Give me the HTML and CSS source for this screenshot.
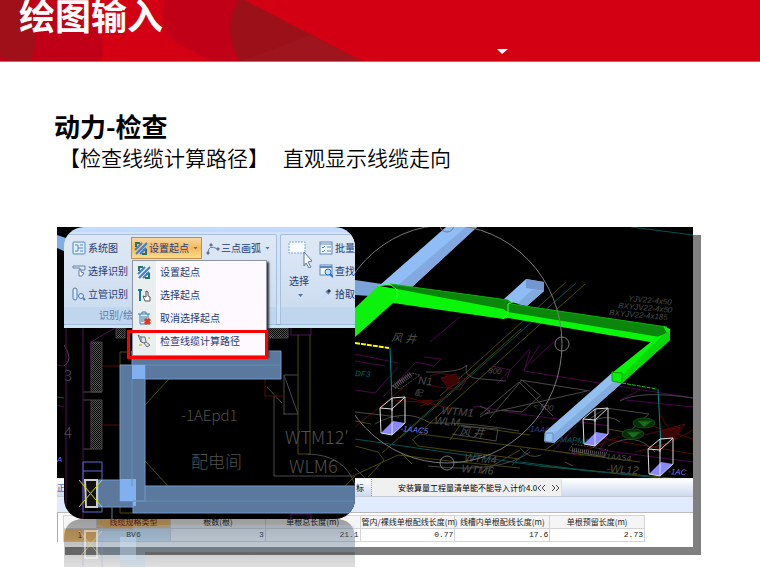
FILE: index.html
```
<!DOCTYPE html>
<html lang="zh-CN">
<head>
<meta charset="utf-8">
<title>绘图输入</title>
<link rel="stylesheet" href="styles.css">
</head>
<body>
<header class="banner">
  <svg class="banner-art" viewBox="0 0 760 62" preserveAspectRatio="xMinYMin slice" aria-hidden="true">
    <path d="M0 0H78Q105 24 102 62H0Z" fill="#c00016"/>
    <path d="M0 0H25Q44 30 30 62H11L0 56Z" fill="#a01019"/>
    <path d="M165 0Q157 29 177 43L213 62H250V0Z" fill="#c00016"/>
    <path d="M238 0Q221 30 240 62H364L245 0Z" fill="#9c1119"/>
    <path d="M240 62L310 35L364 62Z" fill="#a01522" opacity=".7"/>
    <path d="M245 0L364 62H760V0Z" fill="#d30014"/>
    <path d="M497 49H508L502 54Z" fill="#fff"/>
  </svg>
  <h1>绘图输入</h1>
</header>
<main>
  <h2>动力-检查</h2>
  <p class="lead">【检查线缆计算路径】&nbsp;&nbsp; 直观显示线缆走向</p>

  <section class="shot">
    <svg class="scene" viewBox="57 227 636 251" role="img" aria-label="线缆三维走向">
      <defs>
        <g id="box">
          <path d="M1 25L12 27L25 15L13 13Z" fill="#8888ff"/>
          <path d="M0 0L12 1L25-11L12-10ZM0 0L1 25L12 27L25 15V-11M12 1V27M12-10V3" fill="none" stroke="#ddd"/>
        </g>
      </defs>
      <path d="M57 227H693V478H57Z"/>
      <path d="M57 235L66 238V252L57 248Z" fill="#7fafe6"/>
      <g fill="none" stroke="#4b064b">
        <path d="M430 342L460 317M355 354L398 363M355 361L385 366M424 357L441 359L434 366L416 362L383 397M355 390L375 393L398 367M492 366L510 370L507 378M470 413L475 406L520 414L610 426M530 351L524 371L693 398M540 345L523 371M584 456L553 451L577 425M626 400L693 407M620 400L640 390M561 335L531 363M610 430L600 450L693 462M497 384L530 349M57 365L64 366M57 405L64 407"/>
      </g>
      <g fill="none" stroke="#474700">
        <path d="M566 282L440 396M585 284L420 432M521 329L382 453M355 421L371 424M400 452L412 464M355 446L378 452L384 460L368 477M355 475L398 455L440 460L520 468M412 440L420 434L640 462M450 440L460 425L530 435M545 450L560 440M413 440L418 446L520 459M355 468L365 478M540 466L693 480M480 473L520 450M608 429L625 432"/>
      </g>
      <g fill="none" stroke="#005454">
        <path d="M576 283L400 438M355 439L540 466L660 478M512 465L530 448M520 462L600 472M631 227L693 235M57 397L64 398"/>
      </g>
      <g fill="none" stroke="#560808">
        <path d="M355 427L403 388M430 376L440 373L467 379L460 390L427 385M405 397L452 409M393 400L432 403M420 406L448 397M640 422L693 439M645 435L685 424L672 442L635 452M660 415L676 440M600 438L693 454M660 448L693 430M575 455L620 436"/>
        <path d="M441 378L455 374L460 382L448 388ZM422 401L432 400L428 405ZM660 431L681 427L674 437L661 440Z" fill="#3c0606"/>
      </g>
      <g fill="none" stroke="#484848">
        <path d="M426 372Q460 373 467 365Q462 378 482 379L506 381M490 418L522 380L541 396M480 415L519 382L553 416M485 414L587 391M480 417L490 411L480 406M375 424Q405 407 430 423Q470 422 519 431M461 426L498 429L496 441L452 434M520 380L590 391M502 410L522 412L540 396M620 401Q640 390 693 398M588 420L606 408L649 414L630 431M595 420Q610 414 620 422M608 446Q635 430 655 452M428 466Q500 474 530 452M520 448Q530 460 541 455M565 462L573 466M355 412L399 417"/>
        <path d="M392 386L412 373L420 375L400 389ZM569 450L573 444L608 450L604 457Z" stroke-dasharray="2 1"/>
      </g>
      <g fill="none" stroke="#777" stroke-width="5" stroke-dasharray="1 1">
        <path d="M394 387L411 374M572 450L606 455" opacity=".7"/>
      </g>
      <g fill="#082c08" stroke="#0d4d0d">
        <ellipse cx="644" cy="423" rx="11" ry="5"/><ellipse cx="633" cy="434" rx="11" ry="5"/>
        <path d="M638 421H652L644 427ZM627 432H641L633 438Z" fill="#187018"/>
      </g>
      <g class="cad">
        <text transform="translate(628 301) rotate(5)">YJV22-4x50</text>
        <text transform="translate(618 308) rotate(5)">BXYJV22-4x50</text>
        <text transform="translate(609 315) rotate(5)">BXYJV22-4x185</text>
        <text class="cad-lg" transform="translate(391 341) rotate(5)">风 井</text>
        <text class="cad-lg" transform="translate(418 384) rotate(5)">N1</text>
        <text transform="translate(414 395) rotate(8)">配</text>
        <text class="cad-lg" transform="translate(441 414) rotate(5)">WTM1</text>
        <text class="cad-lg" transform="translate(434 424) rotate(5)">WLM</text>
        <text class="cad-lg" transform="translate(459 435) rotate(5)">风 井</text>
        <text transform="translate(488 373) rotate(5)">800</text>
        <text transform="translate(533 409) rotate(5)">&lt; 800</text>
        <text class="cad-lg" transform="translate(464 461) rotate(5)">WTM4</text>
        <text class="cad-lg" transform="translate(461 472) rotate(5)">WTM6</text>
        <text transform="translate(606 459) rotate(5)">1AAS4</text>
        <text class="cad-lg" transform="translate(606 472) rotate(4)">-WL12</text>
        <text class="cad-teal" transform="translate(355 376) rotate(4)">DF3</text>
        <text class="cad-teal" transform="translate(560 442) rotate(4)">MAPM4</text>
        <text class="cad-vio" transform="translate(400 431) rotate(6)">-1AAC5</text>
        <text class="cad-dim" transform="translate(527 431) rotate(6)">-1AAC5</text>
        <text class="cad-vio" transform="translate(668 474) rotate(4)">-1AC</text>
        <text class="cad-vio" x="57" y="462">A</text>
      </g>
      <path d="M355 280L382 284L370 296L355 295Z" fill="#7aa3d8"/>
      <path d="M446 227H477L412 287L380 285Z" fill="#90bdf6"/>
      <path d="M466 227H477L412 287L397 286Z" fill="#82aae0"/>
      <path d="M503 300L526 279L544 282V291L527 306Z" fill="#8ebcf4"/>
      <path d="M526 279L544 282V291L526 288Z" fill="#7398cf"/>
      <path d="M532 290L544 291L527 306L517 304Z" fill="#81aadf"/>
      <path d="M355 308L378 286L390 288L397 290V298L393 303L355 337Z" fill="#0df20d"/>
      <path d="M390 284L508 300L511 304L667 327L668 339L508 314L397 290Z" fill="#0b850b"/>
      <path d="M378 286L397 289L503 309V319L393 303ZM508 312L660 337L668 334L656 343L508 318L503 319V309Z" fill="#09f509"/>
      <path d="M390 284L508 300L511 304L667 327" fill="none" stroke="#0bb00b"/>
      <path d="M503 319L508 314V304L513 302M378 286L390 284L397 290V298" fill="none" stroke="#3bff3b"/>
      <path d="M663 326L670 329V340L622 383L612 380V373L657 337L667 333Z" fill="#08f508"/>
      <path d="M664 334L670 331V340L622 383V375Z" fill="#08d808"/>
      <path d="M612 373L622 383L554 443L544 441L545 432Z" fill="#92bff0"/>
      <path d="M620 376L622 383L554 443L553 435Z" fill="#82abde"/>
      <path d="M545 433H553V442H545Z" fill="none" stroke="#668ec2"/>
      <path d="M612 372L622 373V383L612 381Z" fill="#09ed09" stroke="#04a604"/>
      <path d="M355 343L389 348" stroke="#ff0" stroke-width="2" stroke-dasharray="5 1"/>
      <path d="M390 348L392 402M658 389L661 447" fill="none" stroke="#008b8b"/>
      <path d="M622 383L657 389" stroke="#17c417" stroke-dasharray="4 1"/>
      <use href="#box" x="380" y="408"/><use href="#box" x="583" y="419"/><use href="#box" x="648" y="449"/>
      <g fill="none" stroke="#777">
        <ellipse cx="447" cy="344" rx="115" ry="119"/>
        <circle cx="562" cy="344" r="7"/><circle cx="447" cy="463" r="7"/><circle cx="447" cy="225" r="7"/>
      </g>
    </svg>

    <div class="tabs">
      <span class="tab-edge">正</span>
      <span class="tab-mark">标</span>
      <div class="tab">
        <span>安装算量工程量清单能不能导入计价4.0</span>
        <svg class="arrows" viewBox="0 0 24 8" fill="none" stroke="#444" role="img" aria-label="前后翻页"><path d="M4 1L1 4L4 7M8 1L5 4L8 7M15 1L18 4L15 7M19 1L22 4L19 7"/></svg>
      </div>
    </div>
    <div class="subbar"></div>
    <div class="sheet">
      <table>
        <thead>
          <tr><th class="c-no"></th><th class="c-type on">线缆规格类型</th><th>根数(根)</th><th>单根总长度(m)</th><th>管内/裸线单根配线长度(m)</th><th>线槽内单根配线长度(m)</th><th>单根预留长度(m)</th></tr>
        </thead>
        <tbody>
          <tr><th class="on">1</th><td class="picked">BV6</td><td>3</td><td>21.1</td><td>0.77</td><td>17.6</td><td>2.73</td></tr>
        </tbody>
      </table>
    </div>

    <div class="card">
      <div class="ribbon">
        <div class="group tools">
          <div class="rows">
            <div class="col">
              <button><svg class="ico" viewBox="0 0 14 14" fill="none" stroke="#4d87c9"><rect x="1" y="1" width="12" height="12" rx="1" fill="#e3f0ff"/><path d="M3 4H6V10H3M8 4H11M8 7H11M8 10H11M6 7H8"/></svg>系统图</button>
              <button><svg class="ico" viewBox="0 0 14 14" fill="#dceafa" stroke="#6780a8"><path d="M1 2H13V6H8V4H1Z"/><path d="M7 6V12H10L12 9L9 8V6Z" fill="#fff"/></svg>选择识别</button>
              <button><svg class="ico" viewBox="0 0 14 14" fill="#dceafa" stroke="#5379ae"><rect x="1" y="1" width="4" height="12" rx="2"/><circle cx="9" cy="9" r="2.5"/><path d="M11 11L13 13" stroke-width="2"/></svg>立管识别</button>
            </div>
            <div class="col">
              <button class="hot"><svg class="ico" viewBox="0 0 14 14" fill="none" stroke="#2a7070" stroke-width="2"><path d="M1 2H6M2 2V6M8 13H13M9 9H13M12 9V13"/><path d="M1 9L8 2M2 13L13 2M6 13L12 7" stroke="#3e7fd0"/></svg>设置起点<i class="caret"></i></button>
            </div>
            <div class="col">
              <button class="arc"><svg class="ico" viewBox="0 0 14 14" fill="none" stroke="#657b9a"><path d="M2 12Q2 3 12 8"/><path d="M1 11H3V13H1ZM4 3H6V5H4ZM11 7H13V9H11Z" fill="#546f91"/></svg>三点画弧<i class="caret"></i></button>
            </div>
          </div>
          <div class="group-name">识别/绘制</div>
        </div>
        <div class="group pick">
          <div class="rows">
            <button class="big"><svg class="cursor" viewBox="0 0 26 28"><rect x="3" y="2" width="16" height="11" fill="#f8fbff" stroke="#7aa4dc" stroke-dasharray="2 1"/><path d="M18 12L26 21L22 22L25 27L23 28L20 23L18 26Z" fill="#fff" stroke="#58769e"/></svg>选择<i class="caret"></i></button>
            <div class="col">
              <button><svg class="ico" viewBox="0 0 14 14" fill="#edf5ff" stroke="#5f88ba"><rect x="1" y="1" width="12" height="12"/><path d="M1 3H13M3 6L4 7L6 5M8 6H12M3 10L4 11L6 9M8 10H12"/></svg>批量</button>
              <button><svg class="ico" viewBox="0 0 14 14" fill="#edf5ff" stroke="#5f88ba"><rect x="1" y="1" width="12" height="10"/><path d="M1 3H13" stroke-width="2"/><circle cx="9" cy="8" r="3" fill="#bfe3ff" stroke="#1f75c8"/><path d="M11 10L14 13" stroke="#1f75c8" stroke-width="2"/></svg>查找</button>
              <button><svg class="ico" viewBox="0 0 14 14" fill="none" stroke="#c7dcf2" stroke-width="2"><path d="M2 12L8 6"/><path d="M7 4L10 7" stroke="#6f8db3"/><path d="M9 5L11 3" stroke="#333a4a" stroke-width="3"/></svg>拾取</button>
            </div>
          </div>
          <div class="group-name"></div>
        </div>
      </div>
      <svg class="plan" viewBox="64 328 291 191" role="img" aria-label="配电间平面图">
        <defs><pattern id="hatch" width="4" height="4" patternUnits="userSpaceOnUse"><path d="M0 4L4 0M0 2L2 0M2 4L4 2" stroke="#555"/></pattern></defs>
        <path d="M64 328H355V519H64Z"/>
        <g fill="url(#hatch)" stroke="#444"><path d="M91 342H102V392H91ZM91 400H102V449H91ZM116 328H125V338H116ZM267 328H288V338H267Z"/></g>
        <g fill="none" stroke="#4a4a4a"><path d="M83 392H102M83 400H91M83 449H91M64 345Q74 360 64 366M284 375V415M284 375H298M284 375L298 414H284M267 387L282 403M274 396V476H355M308 454Q345 455 355 485"/></g>
        <g fill="none" stroke="#55105b"><path d="M66 328V505M83 328V519M91 365V342L115 328M291 328V335H311V328M291 519V514H311V519"/></g>
        <g fill="none" stroke="#5b0808"><path d="M102 366H120M102 425H120M265 379V396H284"/></g>
        <g fill="none" stroke="#4c4c00"><path d="M298 335V454H310V335M120 365V352H132M145 405L169 379M145 461L168 486M120 500V513H133M345 486L355 476"/></g>
        <path d="M83 462H102V512H83ZM83 471H102" fill="none" stroke="#6464d8"/>
        <g fill="#5b789f" stroke="#7298cc">
          <path d="M132 351H281V379H132Z"/><path d="M98 480H135V507H98Z"/><path d="M133 486H357V513H133Z"/><path d="M120 365H145V501H120Z"/>
        </g>
        <path d="M132 365H145V379H132ZM120 479H136V506H133V501H120Z" fill="#82b0ee"/>
        <path d="M145 365H281M133 501H355M132 379V486" fill="none" stroke="#6091ae"/>
        <path d="M85 480H97V507H86Z" fill="#111" stroke="#ccc" stroke-width="2"/>
        <path d="M79 480L102 507M102 480L79 507" stroke="#d8d800"/>
        <path d="M104 494L118 481M112 485V519" stroke="#66788e" fill="none"/>
        <g class="plan-text">
          <text class="t-name" x="181" y="421">-1AEpd1</text>
          <text class="t-room" x="191" y="468">配电间</text>
          <text class="t-wire" x="285" y="444">WTM12′</text>
          <text class="t-wire" x="289" y="473">WLM6</text>
          <text class="t-name" x="64" y="381">3</text>
          <text class="t-name" x="64" y="438">4</text>
        </g>
      </svg>
      <div class="menu">
        <button><svg class="ico" viewBox="0 0 14 14" fill="none" stroke="#2a7070" stroke-width="2"><path d="M1 2H6M2 2V6M8 13H13M9 9H13M12 9V13"/><path d="M1 9L8 2M2 13L13 2M6 13L12 7" stroke="#3e7fd0"/></svg>设置起点</button>
        <button><svg class="ico" viewBox="0 0 14 14" fill="none" stroke="#1975a5" stroke-width="2"><path d="M1 2H5M3 2V13"/><path d="M8 13L6 8L9 9V3L11 4V8L13 9V13Z" fill="#fff" stroke="#555" stroke-width="1"/></svg>选择起点</button>
        <button><svg class="ico" viewBox="0 0 14 14" fill="none" stroke="#397db1"><path d="M1 3H13M5 3V1H9V3M3 3V13H11V3M5 5V11M7 5V11M9 5V8"/><path d="M8 8L13 13M13 8L8 13" stroke="#e3341a" stroke-width="3"/></svg>取消选择起点</button>
        <button><svg class="ico" viewBox="0 0 14 14" fill="#dce5f0" stroke="#656b75"><path d="M1 1L4 3L8 3L9 8L13 11L10 13L7 9L4 8Z"/><path d="M4 3L4 8M9 8L7 9" /><path d="M2 11H5M11 4H13" stroke="#e4ce3a" stroke-width="2"/></svg>检查线缆计算路径</button>
      </div>
      <div class="focus"></div>
    </div>
    <svg class="mirror" viewBox="64 519 291 49" aria-hidden="true">
      <defs>
        <linearGradient id="fade" x1="0" y1="0" x2="0" y2="1"><stop offset="0" stop-color="#000" stop-opacity=".36"/><stop offset="1" stop-color="#000" stop-opacity=".12"/></linearGradient>
      </defs>
      <path d="M64 568V539Q64 519 84 519H335Q355 519 355 539V568Z" fill="url(#fade)"/>
      <path d="M133 525H355V552H133ZM98 531H135V558H98ZM120 537H145V568H120Z" fill="#9fd0ff" opacity=".22"/>
      <path d="M120 537H136V560H120Z" fill="#cfe6ff" opacity=".4"/>
      <path d="M85 531H97V558H85Z" fill="none" stroke="#fff" opacity=".5" stroke-width="2"/>
      <path d="M83 526H102V568H83Z" fill="none" stroke="#9d9de8" opacity=".35"/>
      <path d="M79 531L102 558M102 531L79 558" stroke="#f0e070" opacity=".6"/>
    </svg>
  </section>
</main>
</body>
</html>
```
FILE: styles.css
```
* { box-sizing: border-box; }
body {
  margin: 0;
  background: #fff;
  color: #000;
  font-family: "Noto Sans CJK SC", sans-serif;
}
button {
  display: flex;
  align-items: center;
  gap: 2px;
  margin: 0;
  padding: 0;
  border: 0;
  background: none;
  color: #243a78;
  font: 10px/16px "Noto Sans CJK SC", sans-serif;
  white-space: nowrap;
}
svg { display: block; }

.banner {
  position: relative;
  height: 62px;
  background: #d30014;
  border-bottom: 1px solid #e0586a;
}
.banner-art { position: absolute; inset: 0; width: 100%; height: 61px; }
.banner h1 {
  position: relative;
  margin: 0;
  padding-left: 19px;
  color: #fff;
  font-size: 36px;
  line-height: 28px;
}

main { padding: 48px 67px 20px 57px; }
h2 {
  margin: 0 0 0 -3px;
  font-size: 26px;
  line-height: 32px;
}
.lead {
  margin: 0 0 54px;
  padding-left: 2px;
  font-size: 21px;
  line-height: 31px;
  font-weight: 350;
}

.shot {
  position: relative;
  padding-bottom: 5px;
  background: #fff;
  box-shadow: 8px 8px 0 #7f7f7f;
}
.scene { width: 100%; }

.cad text { fill: #4c4c4c; font: italic 8px "Liberation Sans", "Noto Sans CJK SC", sans-serif; }
.cad .cad-lg { font-size: 11px; }
.cad .cad-vio { fill: #7777ee; }
.cad .cad-dim { fill: #3d3d96; }
.cad .cad-teal { fill: #006060; }

.plan-text text { fill: #505050; font-family: "Noto Sans CJK SC", sans-serif; font-weight: 300; }
.plan-text .t-name { font-size: 15px; }
.plan-text .t-room { font-size: 17px; }
.plan-text .t-wire { font-size: 18px; }

.tabs {
  display: flex;
  height: 19px;
  border-top: 1px solid #eee;
  border-bottom: 1px solid #c8ccd4;
  background: linear-gradient(#fff, #cdd9ee);
  font-size: 8px;
  line-height: 18px;
}
.tab-edge { width: 299px; color: #223a9a; }
.tab-mark { width: 16px; border-right: 1px dotted #999; }
.tab {
  display: flex;
  align-items: center;
  gap: 0;
  padding: 0 0 0 26px;
  background: #f0f0f0;
  border-right: 1px solid #ddd;
}
.arrows { width: 24px; height: 8px; }
.subbar { height: 16px; background: #e0ecfd; border-bottom: 1px solid #bbb; }
.sheet { padding: 2px 0 0 5px; border-left: 1px solid #8fb0dc; }

table {
  width: 582px;
  border-collapse: collapse;
  table-layout: fixed;
  color: #222;
  font-size: 8px;
  line-height: 12px;
}
th, td {
  height: 13px;
  padding: 0 1px;
  border: 1px solid #d4d4d4;
  white-space: nowrap;
}
th { background: #f5f5f5; font-weight: 400; }
td { text-align: right; font-family: "Liberation Mono", monospace; }
.c-no { width: 33px; }
.c-type { width: 74px; }
th.on { background: #f4c377; color: #7b2216; }
td.picked { background: #d5e8fc; text-align: center; }

.card {
  position: absolute;
  top: 0;
  left: 7px;
  width: 291px;
  border-radius: 20px;
  overflow: hidden;
}
.plan { width: 100%; }
.ribbon {
  display: flex;
  gap: 3px;
  height: 101px;
  padding: 7px 0 3px;
  background: linear-gradient(#c2dbfe 0 5px, #d3e2f4 5px 97px, #7eabc5 97px 98px, #c9e4f2 98px);
}
.group {
  display: flex;
  flex-direction: column;
  justify-content: space-between;
  border: 1px solid #a6bfdd;
  border-radius: 2px;
  background: linear-gradient(#dfe9f5, #c8daef);
}
.tools { flex: none; width: 213px; border-left: 0; }
.pick { flex: 1; min-width: 0; border-right: 0; }
.rows { display: flex; gap: 4px; padding: 2px 0 0 8px; }
.pick .rows { padding-left: 0; gap: 2px; }
.col { display: flex; flex-direction: column; gap: 1px; }
.col button { height: 22px; }
.tools .col:first-child { width: 55px; }
.ico { flex: none; width: 14px; height: 14px; }
.caret {
  flex: none;
  width: 5px;
  height: 3px;
  margin-left: 3px;
  background: #5a7396;
  clip-path: polygon(0 0, 100% 0, 50% 100%);
}
.col .hot {
  width: 71px;
  padding-left: 2px;
  gap: 1px;
  border: 1px solid #b98f50;
  background: linear-gradient(#f7d7a4, #f4b95d 50%, #fbdc88);
}
.arc { gap: 1px; }
.big { flex-direction: column; gap: 5px; width: 36px; }
.cursor { width: 26px; height: 28px; margin-top: 3px; }
.group-name {
  height: 17px;
  padding-left: 35px;
  background: #c0d5ee;
  color: #5b79aa;
  font-size: 10px;
  line-height: 16px;
}

.menu {
  position: absolute;
  top: 33px;
  left: 68px;
  width: 135px;
  padding-bottom: 2px;
  border: 1px solid #8b95a5;
  background: linear-gradient(90deg, #e9eeee 0 23px, #fdf9ff 23px);
  box-shadow: 2px 2px 2px #333;
}
.menu button { width: 100%; height: 23px; padding: 0 0 2px 4px; gap: 9px; }
.focus {
  position: absolute;
  top: 103px;
  left: 63px;
  width: 141px;
  height: 29px;
  border: 3px solid #f00;
}
.mirror {
  position: absolute;
  top: 292px;
  left: 7px;
  width: 291px;
}
```
